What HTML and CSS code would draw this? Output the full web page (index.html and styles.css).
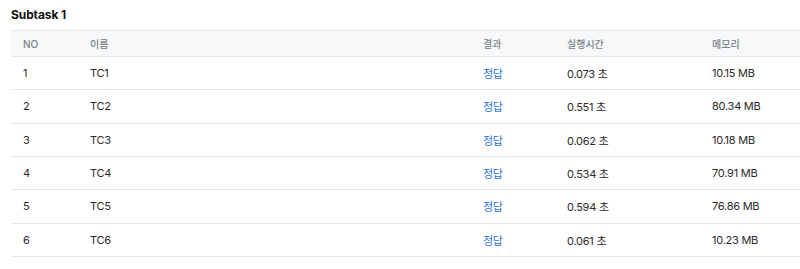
FILE: index.html
```html
<!DOCTYPE html>
<html lang="ko">
<head>
<meta charset="utf-8">
<link rel="stylesheet" href="styles.css">
</head>
<body>
<div class="wrap">
  <h3 class="title">Subtask 1</h3>
  <div class="table">
    <div class="row head">
      <div>NO</div><div>이름</div><div>결과</div><div>실행시간</div><div>메모리</div>
    </div>
    <div class="row"><div>1</div><div>TC1</div><div class="ok">정답</div><div>0.073 초</div><div>10.15 MB</div></div>
    <div class="row"><div>2</div><div>TC2</div><div class="ok">정답</div><div>0.551 초</div><div>80.34 MB</div></div>
    <div class="row"><div>3</div><div>TC3</div><div class="ok">정답</div><div>0.062 초</div><div>10.18 MB</div></div>
    <div class="row"><div>4</div><div>TC4</div><div class="ok">정답</div><div>0.534 초</div><div>70.91 MB</div></div>
    <div class="row"><div>5</div><div>TC5</div><div class="ok">정답</div><div>0.594 초</div><div>76.86 MB</div></div>
    <div class="row"><div>6</div><div>TC6</div><div class="ok">정답</div><div>0.061 초</div><div>10.23 MB</div></div>
  </div>
</div>
</body>
</html>
```

FILE: styles.css
```css
html, body {
  margin: 0;
  padding: 0;
  background: #fff;
}
body {
  font-family: "Inter", "Noto Sans CJK KR", sans-serif;
  color: #222;
}
.wrap {
  padding: 6px 0 0 11px;
}
.title {
  margin: 0 0 6px 0;
  font-size: 12px;
  font-weight: 700;
  line-height: 18px;
  color: #111;
  letter-spacing: -0.1px;
}
.table {
  border-top: 1px solid #e6e8eb;
}
.row {
  display: grid;
  grid-template-columns: 67px 393px 84px 145px 1fr;
  align-items: center;
  height: 32.33px;
  border-bottom: 1px solid #e6e8eb;
  font-size: 11px;
  letter-spacing: -0.25px;
  color: #2a2a2a;
  padding-left: 12px;
}
.row.head {
  height: 25px;
  background: #f7f8fa;
  color: #7a8089;
  font-size: 10px;
  font-weight: 500;
  letter-spacing: 0;
}
.ok {
  color: #1f6fd6;
}
```
